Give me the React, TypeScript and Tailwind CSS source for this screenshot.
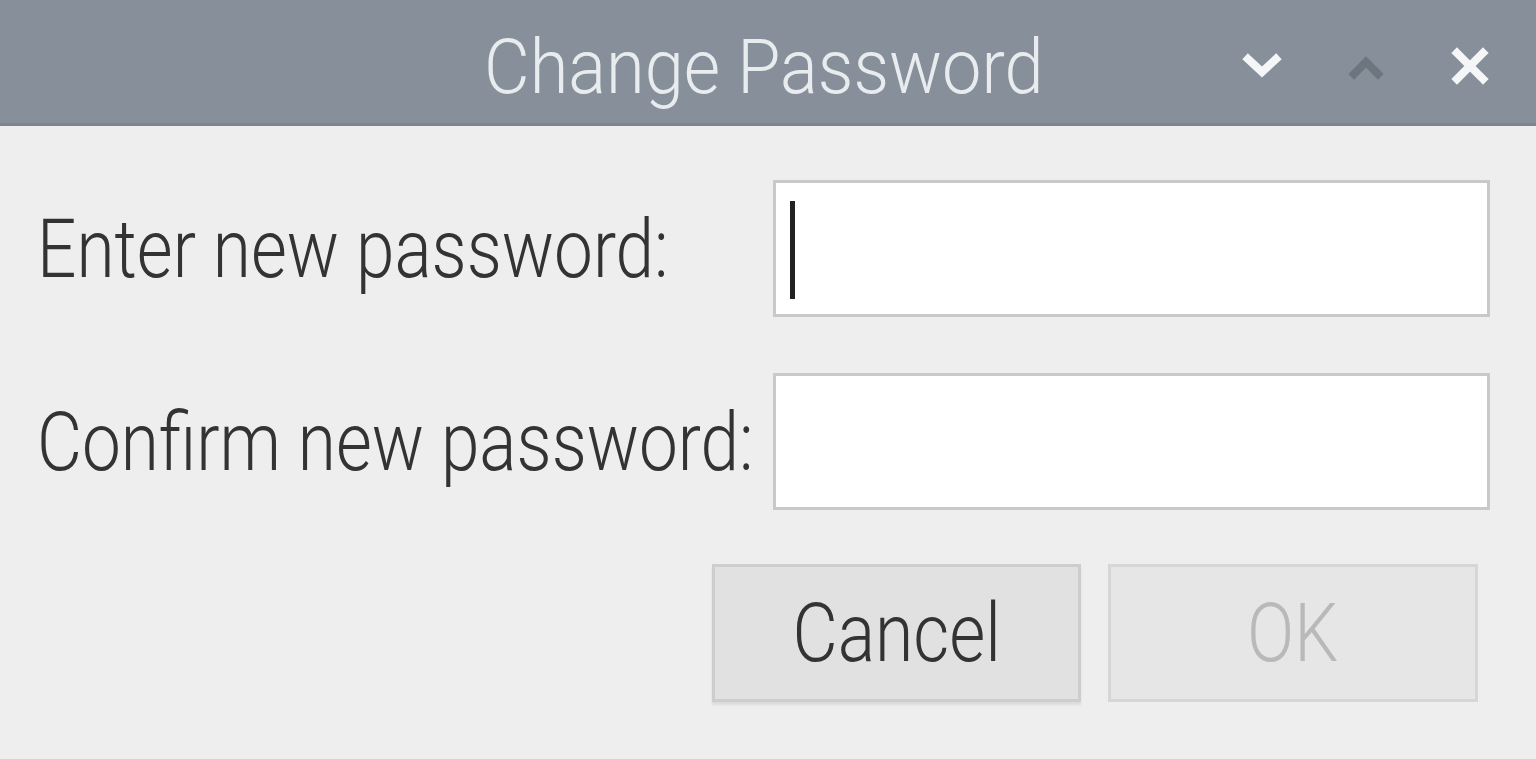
import React from "react";

const font = { fontFamily: "Roboto, 'Noto Sans', sans-serif" };

function ChevronDown() {
  return (
    <svg width="40" height="28" viewBox="0 0 40 28" className="block">
      <path d="M6 7 L20 20 L34 7" fill="none" stroke="#f4f6f8" strokeWidth="8" strokeLinecap="square" />
    </svg>
  );
}

function ChevronUp() {
  return (
    <svg width="40" height="28" viewBox="0 0 40 28" className="block">
      <path d="M8 22 L20 10 L32 22" fill="none" stroke="#6d757e" strokeWidth="8" strokeLinecap="square" />
    </svg>
  );
}

function CloseIcon() {
  return (
    <svg width="40" height="40" viewBox="0 0 40 40" className="block">
      <path d="M7 7 L33 33 M33 7 L7 33" fill="none" stroke="#f4f6f8" strokeWidth="8" strokeLinecap="square" />
    </svg>
  );
}

function Field({ label, caret }: { label: string; caret?: boolean }) {
  return (
    <div className="flex h-[137px] items-center">
      <div className="w-[773px] shrink-0 pl-[37px]">
        <span className="inline-block origin-left scale-x-[0.845] whitespace-nowrap text-[82px] font-light leading-none text-[#333]">
          {label}
        </span>
      </div>
      <div className="relative h-full w-[717px] border-[3px] border-[#c9c9c9] bg-white">
        {caret && <div className="absolute left-[14px] top-[18px] h-[98px] w-[5px] bg-[#222]" />}
      </div>
    </div>
  );
}

export default function App() {
  return (
    <div className="h-[759px] w-[1536px] overflow-hidden bg-[#eeeeee]" style={font}>
      <div className="relative flex h-[126px] items-center justify-center border-b-[3px] border-[#7d858e] bg-[#87909a]">
        <span className="inline-block scale-x-[0.925] pr-[10px] pt-[10px] text-[76px] font-light leading-none text-[#e9ecef]">
          Change Password
        </span>
        <div className="absolute right-[46px] top-0 flex h-full items-center gap-[64px] pt-[8px]">
          <ChevronDown />
          <ChevronUp />
          <CloseIcon />
        </div>
      </div>
      <div className="flex flex-col gap-[56px] pt-[54px]">
        <Field label="Enter new password:" caret />
        <Field label="Confirm new password:" />
      </div>
      <div className="flex justify-end gap-[27px] pr-[58px] pt-[54px]">
        <button className="flex h-[138px] w-[369px] items-center justify-center border-[3px] border-[#cdcdcd] bg-[#e1e1e1] shadow-[0_3px_2px_rgba(0,0,0,0.08)]">
          <span className="inline-block scale-x-[0.85] text-[82px] font-light leading-none text-[#333]">Cancel</span>
        </button>
        <button className="flex h-[138px] w-[370px] items-center justify-center border-[3px] border-[#d6d6d6] bg-[#e6e6e6]">
          <span className="inline-block scale-x-[0.85] text-[82px] font-light leading-none text-[#b9b9b9]">OK</span>
        </button>
      </div>
    </div>
  );
}
